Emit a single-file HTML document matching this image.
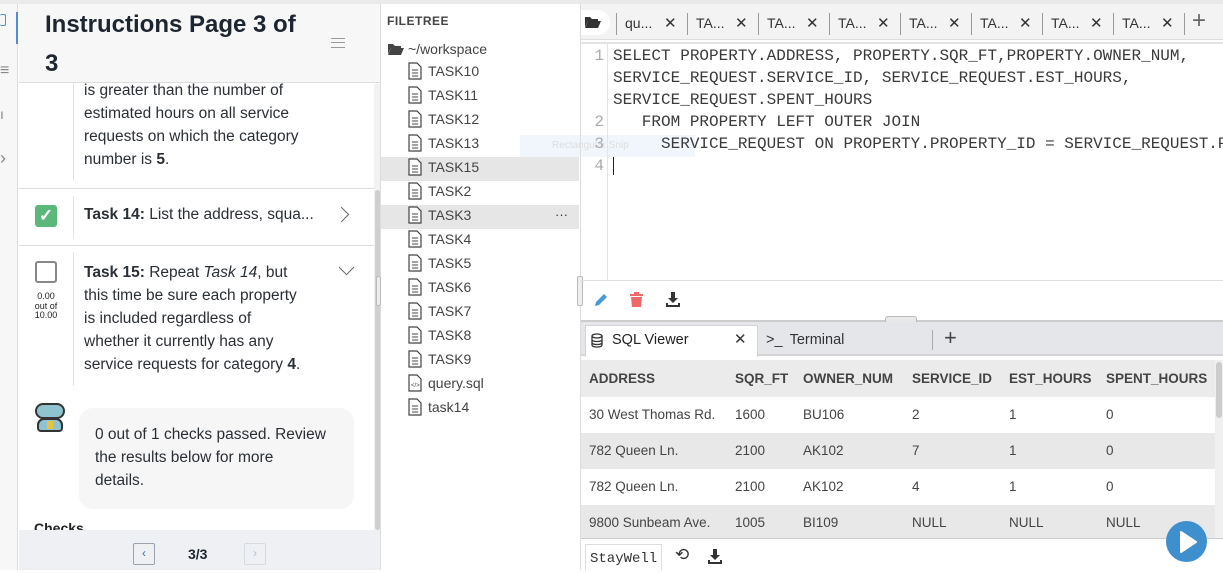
<!DOCTYPE html>
<html><head><meta charset="utf-8"><style>
*{box-sizing:border-box;margin:0;padding:0}
body{width:1223px;height:570px;overflow:hidden;position:relative;background:#fff;font-family:"Liberation Sans",sans-serif;color:#1d2530}
.abs{position:absolute}
.mono{font-family:"Liberation Mono",monospace}
</style></head><body>
<div class="abs" style="left:0;top:0;width:1223px;height:4px;background:#eaeaea"></div>
<!-- left rail -->
<div class="abs" style="left:0;top:4px;width:18px;height:566px;background:#f7f7f7;border-right:1px solid #ddd"></div>
<div class="abs" style="left:16px;top:12px;width:2px;height:32px;background:#4a8fd6"></div>
<div class="abs" style="left:0;top:14px;width:6px;height:12px;border:1.5px solid #4a8fd6;border-left:none;border-radius:2px"></div>
<div class="abs" style="left:0;top:62px;font-size:16px;color:#888">≡</div>
<div class="abs" style="left:0;top:106px;font-size:14px;color:#888">ı</div>
<div class="abs" style="left:0;top:148px;font-size:18px;color:#888">›</div>
<!-- instruction header -->
<div class="abs" style="left:19px;top:4px;width:361px;height:79px;background:#f7f7f7;border-bottom:1px solid #ddd"></div>
<div class="abs" style="left:45px;top:5px;font-size:24px;font-weight:bold;line-height:39px;color:#1d2530">Instructions Page 3 of<br>3</div>
<div class="abs" style="left:331px;top:38px;width:14px;height:10px;border-top:1.5px solid #999;border-bottom:1.5px solid #999"><div style="margin-top:2.5px;border-top:1.5px solid #999"></div></div>
<!-- content -->
<div class="abs" style="left:84px;top:79px;font-size:15.5px;line-height:23px;color:#2a2f36">is greater than the number of<br>estimated hours on all service<br>requests on which the category<br>number is <b>5</b>.</div>
<div class="abs" style="left:73px;top:83px;width:1px;height:98px;background:#e2e2e2"></div>
<div class="abs" style="left:19px;top:188px;width:355px;height:1px;background:#ddd"></div>
<div class="abs" style="left:35px;top:205px;width:22px;height:22px;background:#5cb87a;border-radius:3px;color:#fff;font-size:17px;text-align:center;line-height:22px;font-weight:bold">✓</div>
<div class="abs" style="left:73px;top:196px;width:1px;height:42px;background:#e2e2e2"></div>
<div class="abs" style="left:84px;top:206px;font-size:15.5px;color:#2a2f36"><b>Task 14:</b> List the address, squa...</div>
<div class="abs" style="left:336px;top:209px;width:11px;height:11px;border-right:1.5px solid #666;border-top:1.5px solid #666;transform:rotate(45deg)"></div>
<div class="abs" style="left:19px;top:245px;width:355px;height:1px;background:#ddd"></div>
<div class="abs" style="left:35px;top:261px;width:22px;height:22px;border:2px solid #888;border-radius:3px"></div>
<div class="abs" style="left:30px;top:292px;width:32px;text-align:center;font-size:9px;line-height:9.5px;color:#222">0.00<br>out of<br>10.00</div>
<div class="abs" style="left:73px;top:252px;width:1px;height:134px;background:#e2e2e2"></div>
<div class="abs" style="left:84px;top:261px;font-size:15.5px;line-height:23px;color:#2a2f36"><b>Task 15:</b> Repeat <i>Task 14</i>, but<br>this time be sure each property<br>is included regardless of<br>whether it currently has any<br>service requests for category <b>4</b>.</div>
<div class="abs" style="left:341px;top:262px;width:11px;height:11px;border-right:1.5px solid #666;border-bottom:1.5px solid #666;transform:rotate(45deg)"></div>
<!-- robot -->
<div class="abs" style="left:35px;top:403px;width:30px;height:16px;background:#8fc3cf;border-radius:8px;border:2px solid #333"></div>
<div class="abs" style="left:37px;top:418px;width:26px;height:14px;background:#8fc3cf;border-radius:7px 7px 4px 4px;border:2px solid #333"></div>
<div class="abs" style="left:47px;top:421px;width:6px;height:8px;background:#e8c33c"></div>
<div class="abs" style="left:79px;top:408px;width:275px;height:101px;background:#f6f6f6;border-radius:14px"></div>
<div class="abs" style="left:95px;top:423px;font-size:15.5px;line-height:23px;color:#2a2f36">0 out of 1 checks passed. Review<br>the results below for more<br>details.</div>
<div class="abs" style="left:34px;top:520px;font-size:14px;font-weight:bold;color:#222">Checks</div>
<div class="abs" style="left:374px;top:84px;width:6px;height:446px;background:#f2f2f2"></div>
<div class="abs" style="left:375px;top:190px;width:5px;height:340px;background:#cfcfcf;border-radius:3px"></div>
<!-- bottom nav -->
<div class="abs" style="left:19px;top:530px;width:361px;height:40px;background:#eef0f3"></div>
<div class="abs" style="left:133px;top:543px;width:22px;height:22px;border:1.5px solid #9aa3ad;border-radius:2px;text-align:center;font-size:12px;line-height:18px;color:#3a6fb0">‹</div>
<div class="abs" style="left:188px;top:546px;font-size:14px;font-weight:bold">3/3</div>
<div class="abs" style="left:244px;top:543px;width:22px;height:22px;border:1.5px solid #d6dbe0;border-radius:2px;text-align:center;font-size:12px;line-height:18px;color:#a8c0dd">›</div>
<!-- filetree -->
<div class="abs" style="left:380px;top:4px;width:1px;height:566px;background:#ddd"></div>
<div class="abs" style="left:376px;top:276px;width:5px;height:30px;border:1px solid #bbb;background:#eee;border-radius:2px"></div>
<div class="abs" style="left:387px;top:14px;font-size:12px;font-weight:bold;color:#444;letter-spacing:.5px">FILETREE</div>
<svg class="abs" style="left:387px;top:42px" width="18" height="14"><path d="M1 2h5l2 2h6v2H4L1 12z" fill="#444"/><path d="M4 6h13l-3 7H1z" fill="#444"/></svg>
<div class="abs" style="left:408px;top:41px;font-size:14px;color:#444">~/workspace</div>
<div class="abs" style="left:381px;top:157px;width:198px;height:24px;background:#e6e6e6"></div>
<div class="abs" style="left:381px;top:205px;width:198px;height:24px;background:#e6e6e6"></div>
<div class="abs" style="left:555px;top:207px;font-size:13px;color:#333">···</div>
<div class="abs" style="left:520px;top:135px;width:175px;height:22px;background:#f1f6fd;font-size:10px;color:#ddd;line-height:22px;padding-left:32px">Rectangular Snip</div>
<div id="ft"></div>
<div class="abs" style="left:580px;top:4px;width:1px;height:566px;background:#ddd"></div>
<div class="abs" style="left:577px;top:276px;width:6px;height:30px;border:1px solid #bbb;background:#eee;border-radius:2px"></div>
<!-- editor tabs -->
<div class="abs" style="left:581px;top:4px;width:642px;height:36px;background:#f3f3f3;border-bottom:1px solid #ddd"></div>
<div class="abs" style="left:581px;top:10px;width:29px;height:25px;background:#fff;border-radius:0 12px 12px 0"></div>
<svg class="abs" style="left:584px;top:15px" width="18" height="14"><path d="M1 2h5l2 2h6v2H4L1 12z" fill="#333"/><path d="M4 6h13l-3 7H1z" fill="#333"/></svg>
<div id="tabs"></div>
<div class="abs" style="left:1192px;top:7px;font-size:24px;color:#666">+</div>
<div class="abs" style="left:581px;top:42px;width:642px;height:2px;background:#e4e4e4"></div>
<!-- code -->
<div class="abs mono" style="left:590px;top:45px;font-size:16px;line-height:22px;color:#aaa;text-align:right;width:14px">1<br><br><br>2<br>3<br>4</div>
<div class="abs" style="left:607px;top:44px;width:1px;height:236px;background:#e4e4e4"></div>
<div class="abs mono" style="left:613px;top:45px;font-size:16px;line-height:22px;color:#3a3a3a;white-space:pre;width:610px;overflow:hidden">SELECT PROPERTY.ADDRESS, PROPERTY.SQR_FT,PROPERTY.OWNER_NUM,
SERVICE_REQUEST.SERVICE_ID, SERVICE_REQUEST.EST_HOURS,
SERVICE_REQUEST.SPENT_HOURS
   FROM PROPERTY LEFT OUTER JOIN
     SERVICE_REQUEST ON PROPERTY.PROPERTY_ID = SERVICE_REQUEST.PROPERTY_ID</div>
<div class="abs" style="left:613px;top:157px;width:1px;height:18px;background:#222"></div>
<div class="abs" style="left:581px;top:280px;width:642px;height:1px;background:#ddd"></div>
<!-- toolbar -->
<svg class="abs" style="left:593px;top:292px" width="16" height="16"><path d="M2 14l1-4 8-8 3 3-8 8z" fill="#4a9ad6"/></svg>
<svg class="abs" style="left:629px;top:292px" width="15" height="16"><rect x="1" y="2" width="13" height="2" fill="#ee6a6a"/><rect x="5" y="0" width="5" height="2" fill="#ee6a6a"/><path d="M2 5h11l-1 10H3z" fill="#ee6a6a"/></svg>
<svg class="abs" style="left:666px;top:292px" width="14" height="16"><path d="M5 0h4v6h3l-5 5-5-5h3z" fill="#333"/><path d="M0 11h2v2h10v-2h2v4H0z" fill="#333"/></svg>
<div class="abs" style="left:581px;top:320px;width:642px;height:2px;background:#ccc"></div>
<div class="abs" style="left:885px;top:316px;width:32px;height:8px;background:#e8e8e8;border:1px solid #bbb;border-radius:3px"></div>
<!-- bottom tabs -->
<div class="abs" style="left:581px;top:322px;width:642px;height:34px;background:#e4e6ea;border-bottom:2px solid #d4d4d4"></div>
<div class="abs" style="left:585px;top:325px;width:173px;height:32px;background:#fff;border:1px solid #d4d4d4;border-bottom:none"></div>
<svg class="abs" style="left:591px;top:333px" width="12" height="15"><ellipse cx="6" cy="3" rx="5" ry="2" fill="none" stroke="#333" stroke-width="1.3"/><path d="M1 3v9c0 1.2 2 2 5 2s5-.8 5-2V3M1 6.5c0 1.2 2 2 5 2s5-.8 5-2M1 9.5c0 1.2 2 2 5 2s5-.8 5-2" fill="none" stroke="#333" stroke-width="1.3"/></svg>
<div class="abs" style="left:612px;top:332px;font-size:14.5px;color:#222">SQL Viewer</div>
<div class="abs" style="left:734px;top:330px;font-size:15px;color:#333">✕</div>
<div class="abs" style="left:766px;top:332px;font-size:14.5px;color:#333">&gt;_ <span style="margin-left:3px">Terminal</span></div>
<div class="abs" style="left:932px;top:330px;width:1px;height:20px;background:#aaa"></div>
<div class="abs" style="left:944px;top:325px;font-size:22px;color:#444">+</div>
<!-- table -->
<div class="abs" style="left:581px;top:360px;width:634px;height:37px;background:#ebebeb"></div>
<div class="abs" style="left:581px;top:433px;width:634px;height:36px;background:#e8e8e8"></div>
<div class="abs" style="left:581px;top:505px;width:634px;height:33px;background:#e8e8e8"></div>
<div class="abs" style="left:1215px;top:360px;width:8px;height:178px;background:#f0f0f0"></div>
<div class="abs" style="left:1216px;top:362px;width:6px;height:56px;background:#ccc;border-radius:3px"></div>
<div id="tbl"></div>
<!-- bottom bar -->
<div class="abs" style="left:581px;top:538px;width:642px;height:1px;background:#ccc"></div>
<div class="abs mono" style="left:585px;top:544px;width:77px;height:26px;border:1px solid #ddd;border-bottom:none;font-size:14px;line-height:28px;padding-left:4px;color:#333">StayWell</div>
<div class="abs" style="left:675px;top:545px;font-size:17px;color:#333">⟲</div>
<svg class="abs" style="left:708px;top:549px" width="14" height="16"><path d="M5 0h4v6h3l-5 5-5-5h3z" fill="#333"/><path d="M0 11h2v2h10v-2h2v4H0z" fill="#333"/></svg>
<div class="abs" style="left:1166px;top:521px;width:41px;height:41px;border-radius:50%;background:#3d8fce"></div>
<svg class="abs" style="left:1176px;top:530px" width="24" height="24"><path d="M5 2l15 10-15 10z" fill="#fff" stroke="#fff" stroke-linejoin="round" stroke-width="2"/></svg>
<script>
var f=["TASK10","TASK11","TASK12","TASK13","TASK15","TASK2","TASK3","TASK4","TASK5","TASK6","TASK7","TASK8","TASK9","query.sql","task14"],h="";
f.forEach(function(n,i){var y=62+i*24;
h+='<svg class="abs" style="left:408px;top:'+y+'px" width="14" height="18"><path d="M1 1h8l4 4v12H1z" fill="#fff" stroke="#444" stroke-width="1.2"/>'+(n=="query.sql"?'<text x="3" y="13" font-size="6" fill="#444">&lt;/&gt;</text>':'<path d="M4 8h6M4 11h6M4 14h6" stroke="#444"/>')+'</svg>';
h+='<div class="abs" style="left:428px;top:'+(y+1)+'px;font-size:14px;color:#444">'+n+'</div>';});
document.getElementById("ft").innerHTML=h;
var t=["qu...","TA...","TA...","TA...","TA...","TA...","TA...","TA..."],s="";
t.forEach(function(n,i){var x=616+i*71;
s+='<div class="abs" style="left:'+x+'px;top:13px;width:1px;height:22px;background:#999"></div><div class="abs" style="left:'+(x+9)+'px;top:15px;font-size:14px;color:#333">'+n+'</div><div class="abs" style="left:'+(x+48)+'px;top:14px;font-size:15px;color:#333">✕</div>';});
s+='<div class="abs" style="left:1184px;top:13px;width:1px;height:22px;background:#999"></div>';
document.getElementById("tabs").innerHTML=s;
var cx=[589,735,803,912,1009,1106],hd=["ADDRESS","SQR_FT","OWNER_NUM","SERVICE_ID","EST_HOURS","SPENT_HOURS"],
r=[["30 West Thomas Rd.","1600","BU106","2","1","0"],["782 Queen Ln.","2100","AK102","7","1","0"],["782 Queen Ln.","2100","AK102","4","1","0"],["9800 Sunbeam Ave.","1005","BI109","NULL","NULL","NULL"]],b="";
hd.forEach(function(v,i){b+='<div class="abs" style="left:'+cx[i]+'px;top:371px;font-size:13.5px;font-weight:bold;color:#444">'+v+'</div>';});
r.forEach(function(row,j){row.forEach(function(v,i){b+='<div class="abs" style="left:'+cx[i]+'px;top:'+(407+j*36)+'px;font-size:13.5px;color:#444">'+v+'</div>';});});
document.getElementById("tbl").innerHTML=b;
</script>
</body></html>
